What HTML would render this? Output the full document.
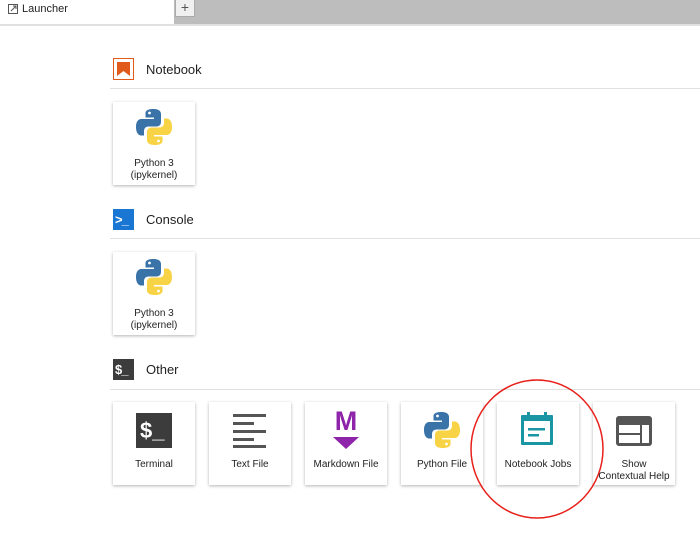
<!DOCTYPE html>
<html><head><meta charset="utf-8"><style>
*{margin:0;padding:0;box-sizing:border-box}
body{width:700px;height:560px;background:#fff;font-family:"Liberation Sans",sans-serif;position:relative;overflow:hidden;color:#222}
.tabbar{position:absolute;left:0;top:0;width:700px;height:25px;background:#bdbdbd;border-bottom:1px solid #c8c8c8}
.tab{position:absolute;left:0;top:0;width:174px;height:25px;background:#fff;font-size:11px;line-height:18px;padding-left:22px}
.plus{position:absolute;left:175px;top:0;width:20px;height:17px;background:#f0f0f0;border:1px solid #aaa;border-top:none;text-align:center;font-size:14px;line-height:15px;color:#555}
.under{position:absolute;left:0;top:24px;width:700px;height:2px;background:#e0e0e0}
.sec{position:absolute;left:146px;font-size:13px;color:#222}
.line{position:absolute;left:110px;width:590px;height:1px;background:#e0e0e0}
.card{position:absolute;width:82px;height:83px;background:#fff;box-shadow:0 1px 3px rgba(0,0,0,.3);text-align:center;font-size:10px;color:#222}
.card .lbl{position:absolute;left:0;right:0;top:56px;line-height:11.5px}
.card svg{position:absolute}
.sm{position:absolute;left:113px;width:21px;height:21px;color:#fff;font-size:13px;font-weight:bold;line-height:21px;padding-left:2px;letter-spacing:-1px}
</style></head><body>
<svg width="0" height="0" style="position:absolute"><defs>
<g id="py">
<path fill="#3a73a8" d="M17.5 0C9 0 9.5 4 9.5 4V8.5h8.5V10H5.5S0 9.5 0 18s5 8.5 5 8.5h3V22s0-4.5 4.5-4.5h8s4.5 0 4.5-4.5V5s.5-5-7.5-5z"/>
<path fill="#f7d345" d="M18.5 36c8.5 0 8-4 8-4v-4.5H18V26h12.5S36 26.5 36 18s-5-8.5-5-8.5h-3V14s0 4.5-4.5 4.5h-8S11 18.5 11 23v8s-.5 5 7.5 5z"/>
<circle cx="13.5" cy="4" r="1.4" fill="#fff"/><circle cx="22.5" cy="32" r="1.4" fill="#fff"/>
</g></defs></svg>

<div class="tabbar"></div>
<div class="tab"><svg style="position:absolute;left:8px;top:4px" width="10" height="10" viewBox="0 0 10 10"><rect x="0.5" y="0.5" width="9" height="9" fill="none" stroke="#555"/><path d="M3 7L8 2M5 2h3v3" stroke="#555" fill="none"/></svg>Launcher</div>
<div class="plus">+</div>
<div class="under"></div>

<svg style="position:absolute;left:113px;top:58px" width="21" height="22"><rect x="0.5" y="0.5" width="20" height="21" fill="#fff" stroke="#e15a1b"/><path d="M4 4h13v14l-6.5-5L4 18z" fill="#e15a1b"/></svg>
<div class="sec" style="top:62px">Notebook</div>
<div class="line" style="top:88px"></div>
<div class="card" style="left:113px;top:102px"><svg style="left:23px;top:7px" width="36" height="37"><use href="#py"/></svg><div class="lbl">Python 3<br>(ipykernel)</div></div>

<div class="sm" style="top:209px;background:#1976d2">&gt;_</div>
<div class="sec" style="top:212px">Console</div>
<div class="line" style="top:238px"></div>
<div class="card" style="left:113px;top:252px"><svg style="left:23px;top:7px" width="36" height="37"><use href="#py"/></svg><div class="lbl">Python 3<br>(ipykernel)</div></div>

<div class="sm" style="top:359px;background:#3c3c3c">$_</div>
<div class="sec" style="top:362px">Other</div>
<div class="line" style="top:389px"></div>

<div class="card" style="left:113px;top:402px"><div style="position:absolute;left:23px;top:11px;width:36px;height:35px;background:#3c3c3c;color:#fff;font-weight:bold;font-size:22px;line-height:35px;text-align:left;padding-left:4px">$_</div><div class="lbl" style="top:57px">Terminal</div></div>
<div class="card" style="left:209px;top:402px"><svg style="left:24px;top:12px" width="34" height="34"><g fill="#555"><rect x="0" y="0" width="33" height="3"/><rect x="0" y="8" width="21" height="3"/><rect x="0" y="16" width="33" height="3"/><rect x="0" y="24" width="21" height="3"/><rect x="0" y="31" width="33" height="3"/></g></svg><div class="lbl" style="top:57px">Text File</div></div>
<div class="card" style="left:305px;top:402px"><div style="position:absolute;left:0;right:0;top:4px;color:#8e24aa;font-weight:bold;font-size:27px">M</div><svg style="left:28px;top:35px" width="26" height="12"><path d="M0 0h26L13 12z" fill="#8e24aa"/></svg><div class="lbl" style="top:57px">Markdown File</div></div>
<div class="card" style="left:401px;top:402px"><svg style="left:23px;top:10px" width="36" height="37"><use href="#py"/></svg><div class="lbl" style="top:57px">Python File</div></div>
<div class="card" style="left:497px;top:402px"><svg style="left:24px;top:10px" width="32" height="33" viewBox="0 0 32 33"><rect x="0" y="3" width="32" height="30" rx="1" fill="#1a95a4"/><rect x="6" y="0" width="3" height="6" fill="#1a95a4"/><rect x="23" y="0" width="3" height="6" fill="#1a95a4"/><rect x="3" y="9" width="26" height="21" fill="#fff"/><rect x="7" y="16" width="17" height="2.5" fill="#1a95a4"/><rect x="7" y="22" width="11" height="2.5" fill="#1a95a4"/></svg><div class="lbl" style="top:57px">Notebook Jobs</div></div>
<div class="card" style="left:593px;top:402px"><svg style="left:23px;top:14px" width="36" height="30"><rect x="0" y="0" width="36" height="30" rx="3" fill="#555"/><rect x="3" y="9" width="21" height="8" fill="#fff"/><rect x="3" y="19" width="21" height="8" fill="#fff"/><rect x="26" y="9" width="7" height="18" fill="#fff"/></svg><div class="lbl" style="top:57px">Show<br>Contextual Help</div></div>

<svg style="position:absolute;left:0;top:0" width="700" height="560"><ellipse cx="537" cy="449" rx="66" ry="69" fill="none" stroke="#e8201a" stroke-width="1.5"/></svg>
</body></html>
